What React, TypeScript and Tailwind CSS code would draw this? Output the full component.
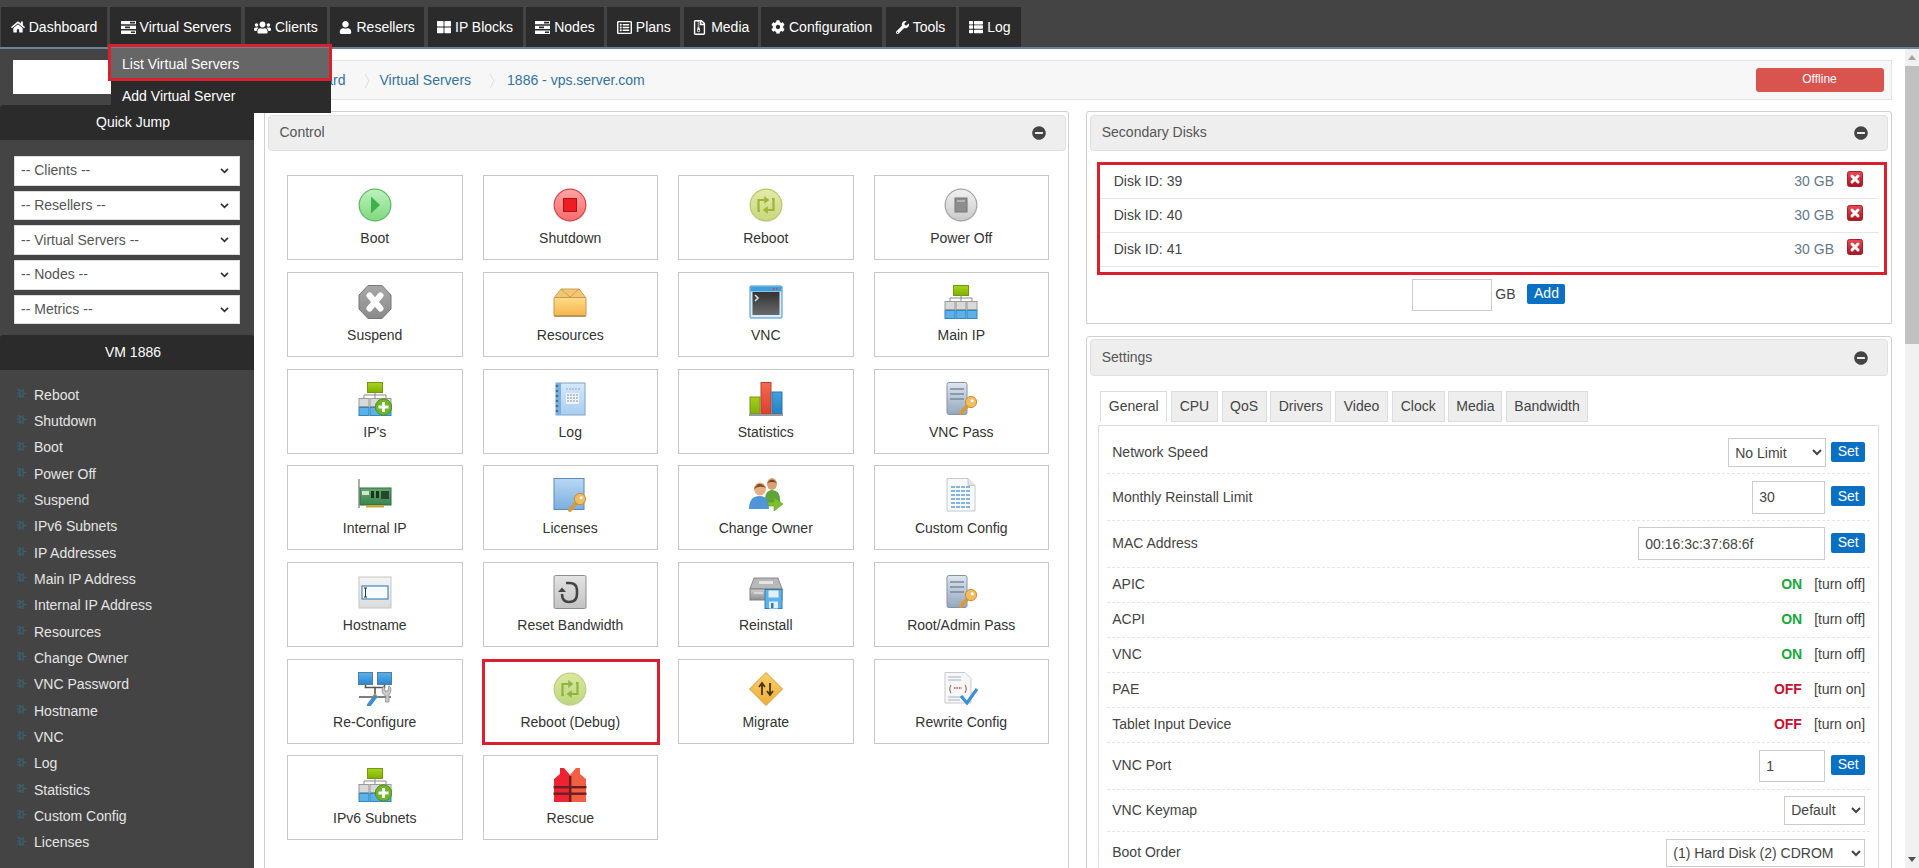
import React from "react";
import { FaHome, FaUsers, FaUser, FaThLarge, FaRegListAlt, FaRegFileArchive, FaCog, FaWrench, FaThList, FaMinusCircle } from "react-icons/fa";

const Svg = ({ children }: { children: React.ReactNode }) => (
  <svg viewBox="0 0 34 34" className="h-[34px] w-[34px] shrink-0">{children}</svg>
);

const Grad = ({ id, a, b }: { id: string; a: string; b: string }) => (
  <defs>
    <linearGradient id={id} x1="0" y1="0" x2="0" y2="1">
      <stop offset="0" stopColor={a} />
      <stop offset="1" stopColor={b} />
    </linearGradient>
  </defs>
);

const Round = ({ id, a, b, s, children }: { id: string; a: string; b: string; s: string; children?: React.ReactNode }) => (
  <Svg>
    <Grad id={id} a={a} b={b} />
    <ellipse cx="17" cy="18" rx="16.5" ry="16" fill="#00000018" />
    <circle cx="17" cy="17" r="15.8" fill={`url(#${id})`} stroke={s} strokeWidth="1.2" />
    {children}
  </Svg>
);

const Arrows = ({ c }: { c: string }) => (
  <g fill="none" stroke={c} strokeWidth="2.2">
    <path d="M11 23 h-1.5 V12 H17" />
    <path d="M23 11 h1.5 V22 H17" />
    <path d="M15.5 8.5 L20 12 L15.5 15.5 Z" fill={c} strokeWidth="0.5" />
    <path d="M18.5 18.5 L14 22 L18.5 25.5 Z" fill={c} strokeWidth="0.5" />
  </g>
);

const KeyIcon = ({ x = 0, y = 0 }: { x?: number; y?: number }) => (
  <g transform={`translate(${x} ${y})`}>
    <path d="M2 17 L11 7" stroke="#d89a3c" strokeWidth="3.8" strokeLinecap="round" />
    <circle cx="12" cy="6" r="5.6" fill="#f2bd5e" stroke="#c98d35" strokeWidth="1" />
    <circle cx="13.2" cy="4.8" r="1.5" fill="#fff" />
  </g>
);

const Tree = ({ p }: { p: string }) => (
  <>
    <Grad id={`tree-${p}`} a="#a9d41e" b="#7fb000" />
    <rect x="9.5" y="0.5" width="15" height="10" fill={`url(#tree-${p})`} stroke="#6f9a10" />
    <path d="M17 10 V13 M6 17 V13 H28 V17 M17 13 V17 M6 24 V26 M17 24 V26 M28 24 V26" stroke="#8a8a8a" fill="none" />
    {[1, 12, 23].map((x) => (
      <rect key={x} x={x} y="16.5" width="10" height="8" fill="#d9d9d9" stroke="#9a9a9a" />
    ))}
    {[1, 12, 23].map((x) => (
      <rect key={x} x={x} y="25.5" width="10" height="8" fill="#5cb2e6" stroke="#2f86c2" />
    ))}
  </>
);

const TreePlus = ({ p }: { p: string }) => (
  <Svg>
    <Tree p={p} />
    <circle cx="25.5" cy="25" r="8.2" fill="#6fb52c" stroke="#4f8f1c" />
    <path d="M25.5 20 V30 M20.5 25 H30.5" stroke="#fff" strokeWidth="2.8" />
  </Svg>
);

const ServerKey = ({ p }: { p: string }) => (
  <Svg>
    <Grad id={p} a="#dfe6ee" b="#93a7bd" />
    <rect x="3" y="0.5" width="20" height="32" rx="2" fill={`url(#${p})`} stroke="#8294a8" />
    <path d="M6 7 H20 M6 12 H20 M6 17 H20" stroke="#77899c" strokeWidth="1.6" />
    <path d="M6 24 H14 M6 27 H12" stroke="#a8b6c5" strokeWidth="1.5" />
    <KeyIcon x={15} y={14} />
  </Svg>
);

const icons: Record<string, React.ReactNode> = {
  Boot: (
    <Round id="ib" a="#bdf2bd" b="#80d880" s="#5dbb62">
      <path d="M13 8.5 L22 17 L13 25.5 Z" fill="#3fb04a" />
    </Round>
  ),
  Shutdown: (
    <Round id="is" a="#ffa3a3" b="#f76d6d" s="#d64545">
      <rect x="10.5" y="10.5" width="13" height="13" fill="#f01c24" stroke="#a51616" />
    </Round>
  ),
  Reboot: (
    <Round id="ir" a="#e4eaa8" b="#c9d87c" s="#b9c76b">
      <Arrows c="#9cb53a" />
    </Round>
  ),
  "Power Off": (
    <Round id="ip" a="#f1f1f1" b="#c9c9c9" s="#a5a5a5">
      <rect x="11" y="10" width="12" height="14" fill="#8d8d8d" stroke="#777" />
      <rect x="13" y="12" width="8" height="2" fill="#b5b5b5" />
    </Round>
  ),
  Suspend: (
    <Svg>
      <Grad id="isu" a="#a8a8a8" b="#8a8a8a" />
      <polygon points="10,0.5 24,0.5 33,10 33,24 24,33.5 10,33.5 1,24 1,10" fill="url(#isu)" stroke="#777" />
      <path d="M11.5 10.5 L22.5 23.5 M22.5 10.5 L11.5 23.5" stroke="#fff" strokeWidth="6" strokeLinecap="round" />
    </Svg>
  ),
  Resources: (
    <Svg>
      <Grad id="ire" a="#ffdc8a" b="#f5b347" />
      <polygon points="1,13 8,4 26,4 33,13" fill="#f4c66f" stroke="#cf9f55" />
      <path d="M8 4 L17 12 L26 4" fill="none" stroke="#cf9f55" />
      <rect x="1" y="12.5" width="32" height="19" rx="1" fill="url(#ire)" stroke="#c29a58" />
      <rect x="1.5" y="30" width="31" height="2" fill="#b59560" />
    </Svg>
  ),
  VNC: (
    <Svg>
      <Grad id="iv" a="#333" b="#6a6a6a" />
      <rect x="1" y="1" width="32" height="32" rx="1" fill="#d9ecf8" stroke="#3f93cc" />
      <rect x="1.5" y="1.5" width="31" height="5" fill="#3f9fdc" />
      <rect x="3.5" y="7" width="27" height="23" fill="url(#iv)" />
      <path d="M6 10 L9 13 L6 16" fill="none" stroke="#ddd" strokeWidth="1.6" />
      <path d="M24 4 H25.5 M27 4 H28.5" stroke="#e33" strokeWidth="1.4" />
    </Svg>
  ),
  "Main IP": (
    <Svg>
      <Tree p="main" />
    </Svg>
  ),
  "IP's": <TreePlus p="ips" />,
  Log: (
    <Svg>
      <Grad id="il" a="#d6e8fb" b="#a9cdf0" />
      <rect x="3" y="1" width="29" height="32" fill="url(#il)" stroke="#7ea4c9" />
      <rect x="3" y="1" width="5" height="32" fill="#7db0dc" />
      {[4, 9, 14, 19, 24, 29].map((y) => (
        <circle key={y} cx="4" cy={y} r="1.3" fill="#3a6f9e" />
      ))}
      <path d="M13 7 H27" stroke="#8fa9c4" strokeWidth="1" strokeDasharray="2 1" />
      <rect x="13" y="11" width="13" height="11" fill="#eef5fc" />
      <path d="M14 13 H25 M14 16 H25 M14 19 H25" stroke="#7f8fa3" strokeWidth="1" strokeDasharray="2 1" />
    </Svg>
  ),
  Statistics: (
    <Svg>
      <Grad id="i1" a="#a6cf1a" b="#7fae10" />
      <Grad id="i2" a="#f46a50" b="#d9412f" />
      <Grad id="i3" a="#3ea3e0" b="#2b7fbf" />
      <rect x="1" y="15" width="10" height="17" fill="url(#i1)" stroke="#6f9618" />
      <rect x="12" y="0.5" width="10" height="31.5" fill="url(#i2)" stroke="#b9412f" />
      <rect x="23" y="10" width="10" height="22" fill="url(#i3)" stroke="#2a74ad" />
      <rect x="0" y="32" width="34" height="2" fill="#9a9a9a" />
    </Svg>
  ),
  "VNC Pass": <ServerKey p="ivp" />,
  "Internal IP": (
    <Svg>
      <Grad id="ii" a="#6aa56a" b="#3a8450" />
      <path d="M1 1 V30" stroke="#888" strokeWidth="1.4" />
      <rect x="2" y="10" width="31" height="17" fill="url(#ii)" stroke="#2f6d44" />
      <rect x="4" y="13" width="7" height="4" fill="#cfe5cf" />
      <rect x="13" y="13" width="3" height="7" fill="#16351f" />
      <rect x="18" y="13" width="3" height="7" fill="#16351f" />
      <rect x="23" y="13" width="8" height="8" fill="#24472f" />
      <rect x="8" y="27" width="18" height="2.5" fill="#caa43c" />
    </Svg>
  ),
  Licenses: (
    <Svg>
      <Grad id="ili" a="#b9d8f4" b="#7aaee0" />
      <rect x="1" y="0.5" width="30" height="31" fill="url(#ili)" stroke="#5b89b8" />
      <KeyIcon x={15} y={15} />
    </Svg>
  ),
  "Change Owner": (
    <Svg>
      <ellipse cx="23" cy="6" rx="5" ry="6" fill="#d9a074" />
      <path d="M18 5 Q23 -2 28 5 Q23 3 18 5Z" fill="#7a4420" />
      <path d="M16 20 Q17 12 23 12 Q31 12 31 22 V26 H16Z" fill="#5da63a" />
      <ellipse cx="11" cy="11" rx="6" ry="6.5" fill="#e5b088" />
      <path d="M5 11 Q10 1 17 10 Q11 7 5 11Z" fill="#8a4f22" />
      <path d="M0 31 Q0 18 11 18 Q20 18 20 31 Z" fill="#4f95d8" />
      <path d="M19 24 H25 V19 L34 26 L25 33 V28 H19 Z" fill="#7cc02e" stroke="#5f9a1f" strokeWidth="0.6" />
    </Svg>
  ),
  "Custom Config": (
    <Svg>
      <path d="M3 0.5 H24 L31 7.5 V33 H3 Z" fill="#f7f9fb" stroke="#c4c9cf" />
      <path d="M24 0.5 V7.5 H31" fill="#dfe4e9" stroke="#c4c9cf" />
      {[9, 13, 17, 21, 25, 29].map((y) => (
        <path key={y} d={`M7 ${y} H27`} stroke="#5d9fdc" strokeWidth="1.3" strokeDasharray="4 1" />
      ))}
    </Svg>
  ),
  Hostname: (
    <Svg>
      <Grad id="ih" a="#f4f4f4" b="#dcdcdc" />
      <rect x="1" y="2" width="32" height="31" fill="url(#ih)" stroke="#c6c6c6" />
      <rect x="4" y="11" width="26" height="13" fill="#f7fbff" stroke="#5d97c6" strokeWidth="1.4" />
      <path d="M6 13 H9 M7.5 13 V22 M6 22 H9" stroke="#333" strokeWidth="1" />
    </Svg>
  ),
  "Reset Bandwidth": (
    <Svg>
      <Grad id="irb" a="#e3e3e3" b="#c3c3c3" />
      <rect x="1" y="0.5" width="32" height="33" rx="1.5" fill="url(#irb)" stroke="#8e8e8e" />
      <path d="M13 8 H16 Q24 8 24 15 V19 Q24 27 16 27 Q9 27 9 19" fill="none" stroke="#444" strokeWidth="2.6" />
      <path d="M5 17 L9 12.5 L13 17 Z" fill="#444" />
    </Svg>
  ),
  Reinstall: (
    <Svg>
      <Grad id="irn" a="#cfcfcf" b="#8f8f8f" />
      <polygon points="5,3 29,3 33,14 1,14" fill="#b9b9b9" stroke="#8a8a8a" />
      <rect x="10" y="6" width="14" height="3" fill="#e5e5e5" />
      <rect x="1" y="14" width="32" height="11" fill="url(#irn)" stroke="#808080" />
      <path d="M5 18 H14" stroke="#e3e3e3" strokeWidth="1.5" />
      <rect x="16" y="14.5" width="17" height="19" fill="#5db3e8" stroke="#2f7fba" />
      <rect x="19.5" y="15.5" width="10" height="7" fill="#e4f0f8" />
      <rect x="20" y="26.5" width="9" height="7" fill="#e4f0f8" />
      <rect x="22" y="28" width="2.5" height="5" fill="#2f7fba" />
    </Svg>
  ),
  "Root/Admin Pass": <ServerKey p="ira" />,
  "Re-Configure": (
    <Svg>
      <Grad id="ic" a="#55b4ef" b="#2a86d0" />
      <rect x="0.5" y="0.5" width="14" height="12" fill="url(#ic)" stroke="#5a7c96" />
      <rect x="19.5" y="0.5" width="14" height="12" fill="url(#ic)" stroke="#5a7c96" />
      <path d="M7.5 13 V15.5 H26.5 V13 M17 15.5 V24 M1 25 H33" stroke="#555" strokeWidth="1.6" fill="none" />
      <circle cx="17" cy="24.5" r="2.4" fill="#e6a23c" />
      <path d="M26 14 A6 6 0 0 0 28 24 L27.5 30 H31 L31 23 Q35 17 31 14 L30 19 H27Z" fill="#c9c9c9" stroke="#8c8c8c" strokeWidth="0.8" />
      <path d="M17 25 L11 33" stroke="#3c8ed0" strokeWidth="4" strokeLinecap="round" />
    </Svg>
  ),
  "Reboot (Debug)": (
    <Round id="ird" a="#dbe8a0" b="#bfd67e" s="#bcd07c">
      <Arrows c="#8fb53e" />
    </Round>
  ),
  Migrate: (
    <Svg>
      <Grad id="migrate-fill" a="#f9cf6a" b="#efae38" />
      <polygon points="17,0.5 33.5,17 17,33.5 0.5,17" fill="url(#migrate-fill)" stroke="#d49a32" strokeLinejoin="round" />
      <path d="M13 23 V12 M10 15 L13 11 L16 15" stroke="#4a3615" strokeWidth="1.8" fill="none" />
      <path d="M21 11 V22 M18 19 L21 23 L24 19" stroke="#4a3615" strokeWidth="1.8" fill="none" />
    </Svg>
  ),
  "Rewrite Config": (
    <Svg>
      <path d="M1 0.5 H21 L27 6.5 V31 H1 Z" fill="#f6f7f9" stroke="#c6c9ce" />
      <path d="M4 5 H17 M4 8 H17 M4 25 H20 M4 28 H16" stroke="#a8b2be" strokeWidth="1.1" />
      <path d="M7 13 Q4.5 17 7 21 M21 13 Q23.5 17 21 21" stroke="#9a6a4a" strokeWidth="1.1" fill="none" />
      <path d="M10 16 H18" stroke="#b7483c" strokeWidth="1.6" strokeDasharray="1.5 1" />
      <path d="M17 24 L23 31 L33 17" stroke="#3b8fd4" strokeWidth="3.2" fill="none" />
    </Svg>
  ),
  "IPv6 Subnets": <TreePlus p="v6" />,
  Rescue: (
    <Svg>
      <path d="M1 34 V11 L7 6 V0 H11 L17 7 V34 Z" fill="#ee2332" />
      <path d="M33 34 V11 L27 6 V0 H23 L17 7 V34 Z" fill="#f25f42" />
      <rect x="0.5" y="18" width="33" height="2.4" fill="#6a2020" />
      <rect x="0.5" y="24.5" width="33" height="2.4" fill="#6a2020" />
      <rect x="16" y="8" width="2.4" height="26" fill="#6a2020" />
    </Svg>
  ),
};

const Rows = () => (
  <svg viewBox="0 0 15 13" className="h-[13px] w-[15px] shrink-0" fill="currentColor">
    <path d="M0 0 H15 V3.2 H0 Z M0 4.8 H15 V8 H0 Z M0 9.6 H15 V13 H0 Z" />
    <path d="M9 0.8 H14 V2.4 H9 Z M4 5.6 H9 V7.2 H4 Z M10 10.4 H14 V12 H10 Z" fill="#2b2b2b" />
  </svg>
);

const DeleteIcon = ({ id }: { id: string }) => (
  <svg viewBox="0 0 16 16" className="h-4 w-4 shrink-0">
    <Grad id={id} a="#ec4a55" b="#a5141f" />
    <rect x="0.5" y="0.5" width="15" height="15" rx="2" fill={`url(#${id})`} stroke="#a8202a" />
    <path d="M5 5 L11 11 M11 5 L5 11" stroke="#fff" strokeWidth="3" strokeLinecap="round" />
  </svg>
);

const NavTab = ({ w, icon, label }: { w: string; icon: React.ReactNode; label: string }) => (
  <div className={`${w} flex h-full shrink-0 items-center justify-center gap-[4px] bg-[#2b2b2b] text-[14px] text-white`}>
    {icon}
    <span>{label}</span>
  </div>
);

const MenuGlyph = () => (
  <svg viewBox="0 0 11 11" className="mb-[3px] h-[11px] w-[11px] shrink-0" fill="none" stroke="#3a6273" strokeWidth="1.2">
    <path d="M1 2 H4 M1 5 H4 M1 8 H4 M4 1 V10 M7 1 V10 M4 3 H7 M4 8 H7 M7 5.5 H10.5" />
  </svg>
);

const SideSelect = ({ label }: { label: string }) => (
  <div className="relative h-[29.7px]">
    <select className="h-full w-full appearance-none border border-[#ddd] bg-white pl-[6px] text-[14px] text-[#555]">
      <option>{label}</option>
    </select>
    <svg viewBox="0 0 10 7" className="pointer-events-none absolute right-[11px] top-[12px] h-[6px] w-[9px]" fill="none" stroke="#333" strokeWidth="2">
      <path d="M1 1 L5 5 L9 1" />
    </svg>
  </div>
);

const PanelHead = ({ title }: { title: string }) => (
  <div className="flex h-[36.7px] items-center justify-between rounded-[4px] border border-[#e0e0e0] bg-[#eee] pl-[11px] pr-[19px] text-[14px] text-[#555]">
    <span>{title}</span>
    <FaMinusCircle className="text-[14px] text-[#444]" />
  </div>
);

const BreadSep = () => (
  <svg viewBox="0 0 6 16" className="ml-[18px] mr-[10px] h-4 w-[6px] shrink-0" fill="none" stroke="#ddd">
    <path d="M1 1 L5 8 L1 15" />
  </svg>
);

const SetBtn = () => (
  <button className="-mt-[2px] flex h-[20px] w-[34px] shrink-0 items-center justify-center rounded-[2px] bg-[#0a70c4] text-[14px] text-white">Set</button>
);

const Toggle = ({ label, on }: { label: string; on: boolean }) => (
  <div className="flex h-[35px] items-center justify-between border-b border-dashed border-[#e6e6e6] pl-[5px] pr-[5px]">
    <span>{label}</span>
    <span className="flex items-center gap-[12px]">
      <b className={on ? "font-bold text-[#19a83a]" : "font-bold text-[#c8102e]"}>{on ? "ON" : "OFF"}</b>
      <span>{on ? "[turn off]" : "[turn on]"}</span>
    </span>
  </div>
);

const navTabs = [
  { w: "ml-px w-[106px]", icon: <FaHome className="text-[14px]" />, label: "Dashboard" },
  { w: "w-[131px]", icon: <Rows />, label: "Virtual Servers" },
  { w: "w-[82px]", icon: <FaUsers className="text-[17px]" />, label: "Clients" },
  { w: "w-[94px]", icon: <FaUser className="text-[13px]" />, label: "Resellers" },
  { w: "w-[95px]", icon: <FaThLarge className="text-[14px]" />, label: "IP Blocks" },
  { w: "w-[78px]", icon: <Rows />, label: "Nodes" },
  { w: "w-[73px]", icon: <FaRegListAlt className="text-[15px]" />, label: "Plans" },
  { w: "w-[74px]", icon: <FaRegFileArchive className="text-[15px]" />, label: "Media" },
  { w: "w-[121px]", icon: <FaCog className="text-[14px]" />, label: "Configuration" },
  { w: "w-[70px]", icon: <FaWrench className="text-[13px]" />, label: "Tools" },
  { w: "w-[62px]", icon: <FaThList className="text-[14px]" />, label: "Log" },
];

const sideItems = ["Reboot", "Shutdown", "Boot", "Power Off", "Suspend", "IPv6 Subnets", "IP Addresses", "Main IP Address", "Internal IP Address", "Resources", "Change Owner", "VNC Password", "Hostname", "VNC", "Log", "Statistics", "Custom Config", "Licenses"];

const cards = ["Boot", "Shutdown", "Reboot", "Power Off", "Suspend", "Resources", "VNC", "Main IP", "IP's", "Log", "Statistics", "VNC Pass", "Internal IP", "Licenses", "Change Owner", "Custom Config", "Hostname", "Reset Bandwidth", "Reinstall", "Root/Admin Pass", "Re-Configure", "Reboot (Debug)", "Migrate", "Rewrite Config", "IPv6 Subnets", "Rescue"];

const tabs = [
  { t: "General", w: "w-[67px]" },
  { t: "CPU", w: "w-[47px]" },
  { t: "QoS", w: "w-[45px]" },
  { t: "Drivers", w: "w-[61px]" },
  { t: "Video", w: "w-[53px]" },
  { t: "Clock", w: "w-[53px]" },
  { t: "Media", w: "w-[54px]" },
  { t: "Bandwidth", w: "w-[82px]" },
];

export default function App() {
  return (
    <div className="relative flex h-[868px] w-full flex-col overflow-hidden bg-white font-['Liberation_Sans',Arial,sans-serif] text-[14px] text-[#444]">
      <header className="flex h-[49px] shrink-0 gap-[3.4px] border-b-[2px] border-[#6b8299] bg-[#444] pt-[7px]">
        {navTabs.map((n) => (
          <NavTab key={n.label} w={n.w} icon={n.icon} label={n.label} />
        ))}
      </header>

      <div className="flex min-h-0 flex-1">
        <aside className="flex w-[254px] shrink-0 flex-col bg-[#444]">
          <div className="px-[13px] pb-[11px] pt-[11px]">
            <input className="h-[34px] w-full bg-white" />
          </div>
          <div className="flex h-[35px] shrink-0 items-center justify-center rounded-t-[3px] bg-[#2b2b2b] pl-[12px] text-white">Quick Jump</div>
          <div className="flex flex-col gap-[5px] px-[14px] pt-[16px]">
            <SideSelect label="-- Clients --" />
            <SideSelect label="-- Resellers --" />
            <SideSelect label="-- Virtual Servers --" />
            <SideSelect label="-- Nodes --" />
            <SideSelect label="-- Metrics --" />
          </div>
          <div className="mt-[11px] flex h-[35px] shrink-0 items-center justify-center rounded-t-[3px] bg-[#2b2b2b] pl-[12px] text-white">VM 1886</div>
          <nav className="flex flex-col pl-[16px] pt-[11.5px]">
            {sideItems.map((s) => (
              <div key={s} className="flex h-[26.34px] items-center gap-[7px] text-[#e4e4e4]">
                <MenuGlyph />
                <span>{s}</span>
              </div>
            ))}
          </nav>
        </aside>

        <main className="min-w-0 flex-1 overflow-hidden pl-[10px] pr-[13.5px] pt-[11px]">
          <div className="flex h-[39.5px] items-center border border-[#e5e5e5] bg-[#f7f7f7] pl-[12px] pr-[7px] text-[#35729b]">
            <div className="flex items-center pt-[2px]">
              <span>Dashboard</span>
              <BreadSep />
              <span>Virtual Servers</span>
              <BreadSep />
              <span className="ml-[2px]">1886 - vps.server.com</span>
            </div>
            <div className="ml-auto flex h-[24px] w-[128px] items-center justify-center rounded-[3px] bg-[#d9534f] pb-px text-[12px] text-white">Offline</div>
          </div>

          <div className="mt-[11.5px] grid grid-cols-2 items-start gap-x-[17px]">
            <section className="h-[800px] rounded-t-[3px] border border-[#d0d0d0] p-[2.5px]">
              <PanelHead title="Control" />
              <div className="grid grid-cols-[repeat(4,175.5px)] gap-x-[20px] gap-y-[11.7px] pl-[19.5px] pt-[24px] text-[#333]">
                {cards.map((c) => (
                  <div key={c} className="relative flex h-[85px] flex-col items-center border border-[#c8c8c8] pt-[12px]">
                    {icons[c]}
                    <span className="mt-[6px] leading-[20px]">{c}</span>
                    {c === "Reboot (Debug)" && <div className="absolute -bottom-[2px] -left-[2px] -right-[3px] -top-px border-[3px] border-[#d9202e]" />}
                  </div>
                ))}
              </div>
            </section>

            <div className="flex flex-col gap-[12px]">
              <section className="rounded-t-[3px] border border-[#d0d0d0] p-[2.5px] pb-[12px]">
                <PanelHead title="Secondary Disks" />
                <div className="ml-[7px] mr-px mt-[10.5px] border-[3px] border-[#d9202e] pb-[5px]">
                  {["39", "40", "41"].map((d) => (
                    <div key={d} className="mr-[5px] flex h-[34px] items-center justify-between border-b border-[#e6e6e6] pl-[14px] pr-[16px]">
                      <span className="pt-px">Disk ID: {d}</span>
                      <span className="flex items-center gap-[13px]">
                        <span className="text-[#66788a]">30 GB</span>
                        <span className="-mt-[4px]">
                          <DeleteIcon id={`del${d}`} />
                        </span>
                      </span>
                    </div>
                  ))}
                </div>
                <div className="mt-[4px] flex items-center justify-center">
                  <input className="h-[32px] w-[80px] border border-[#ccc] bg-white" />
                  <span className="ml-[3px]">GB</span>
                  <button className="-mt-[2px] ml-[12px] flex h-[20px] w-[38px] items-center justify-center rounded-[2px] bg-[#0a70c4] text-white">Add</button>
                </div>
              </section>

              <section className="h-[600px] rounded-t-[3px] border border-[#d0d0d0] p-[2.5px]">
                <PanelHead title="Settings" />
                <div className="ml-[10.5px] mt-[15px] flex h-[31px] gap-[3.7px]">
                  {tabs.map((t, i) => (
                    <div key={t.t} className={`${t.w} flex items-center justify-center border border-[#ddd] ${i === 0 ? "border-b-0 bg-white" : "bg-[#eee]"}`}>
                      {t.t}
                    </div>
                  ))}
                </div>
                <div className="ml-[8.5px] mt-[3px] w-[781px] border border-[#ddd] px-[8px] pt-[6.5px]">
                  <div className="flex h-[42px] items-center justify-between border-b border-dashed border-[#e6e6e6] pl-[5px] pr-[5px]">
                    <span>Network Speed</span>
                    <span className="flex items-center gap-[5px]">
                      <select className="h-[29px] w-[98px] border border-[#ccc] bg-white pl-[2px]">
                        <option>No Limit</option>
                      </select>
                      <SetBtn />
                    </span>
                  </div>
                  <div className="flex h-[46.5px] items-center justify-between border-b border-dashed border-[#e6e6e6] pl-[5px] pr-[5px]">
                    <span>Monthly Reinstall Limit</span>
                    <span className="flex items-center gap-[6px]">
                      <input readOnly value="30" className="h-[33px] w-[73px] border border-[#ccc] bg-white px-[6px]" />
                      <SetBtn />
                    </span>
                  </div>
                  <div className="flex h-[47px] items-center justify-between border-b border-dashed border-[#e6e6e6] pl-[5px] pr-[5px]">
                    <span>MAC Address</span>
                    <span className="flex items-center gap-[6px]">
                      <input readOnly value="00:16:3c:37:68:6f" className="h-[33px] w-[187px] border border-[#ccc] bg-white px-[6px]" />
                      <SetBtn />
                    </span>
                  </div>
                  <Toggle label="APIC" on />
                  <Toggle label="ACPI" on />
                  <Toggle label="VNC" on />
                  <Toggle label="PAE" on={false} />
                  <Toggle label="Tablet Input Device" on={false} />
                  <div className="flex h-[47px] items-center justify-between border-b border-dashed border-[#e6e6e6] pl-[5px] pr-[5px]">
                    <span>VNC Port</span>
                    <span className="flex items-center gap-[6px]">
                      <input readOnly value="1" className="h-[32px] w-[66px] border border-[#ccc] bg-white px-[6px]" />
                      <SetBtn />
                    </span>
                  </div>
                  <div className="flex h-[42px] items-center justify-between border-b border-dashed border-[#e6e6e6] pl-[5px] pr-[5px]">
                    <span>VNC Keymap</span>
                    <select className="h-[29px] w-[81px] border border-[#ccc] bg-white pl-[2px]">
                      <option>Default</option>
                    </select>
                  </div>
                  <div className="flex h-[42px] items-center justify-between pl-[5px] pr-[5px]">
                    <span>Boot Order</span>
                    <select className="h-[28px] w-[199px] border border-[#ccc] bg-white pl-[2px]">
                      <option>(1) Hard Disk (2) CDROM</option>
                    </select>
                  </div>
                </div>
              </section>
            </div>
          </div>
        </main>

        <div className="flex w-[14px] shrink-0 flex-col bg-[#f1f1f1]">
          <div className="flex h-[17px] items-center justify-center">
            <div className="h-0 w-0 border-x-[4px] border-b-[5px] border-x-transparent border-b-[#a3a3a3]" />
          </div>
          <div className="h-[278px] bg-[#c1c1c1]" />
          <div className="flex-1" />
          <div className="flex h-[17px] items-center justify-center">
            <div className="h-0 w-0 border-x-[4px] border-t-[5px] border-x-transparent border-t-[#505050]" />
          </div>
        </div>
      </div>

      <div className="absolute left-[111px] top-[48px] w-[220px] bg-[#2b2b2b] text-white">
        <div className="relative flex h-[32px] items-center bg-[#666] pl-[11px]">
          List Virtual Servers
          <div className="absolute -bottom-px -left-[3px] -right-px -top-[4px] border-[3px] border-[#d9202e]" />
        </div>
        <div className="flex h-[33px] items-center pl-[11px]">Add Virtual Server</div>
      </div>
    </div>
  );
}
